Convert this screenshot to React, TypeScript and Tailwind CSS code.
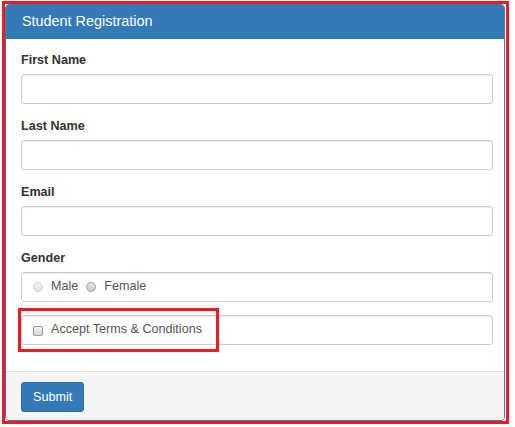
import React from 'react';

const inputCls =
  'h-[30px] w-full rounded-[3px] border border-[#cccccc] bg-white shadow-[inset_0_1px_1px_rgba(0,0,0,0.075)] outline-none';

function Field({ label }: { label: string }) {
  return (
    <div className="mb-[13px]">
      <label className="block h-[18px] mb-[5px] text-[12.6px] leading-[18px] font-bold text-[#333333]">{label}</label>
      <input type="text" className={inputCls} />
    </div>
  );
}

export default function App() {
  return (
    <div className="min-h-screen bg-white pl-[2px] pt-[1px] font-['Liberation_Sans',Arial,sans-serif]">
      {/* red annotation frame */}
      <div className="w-[507px] h-[423px] border-[3px] border-[#ed1c24]">
        <div className="w-[500px] h-full flex flex-col rounded-[4px] border border-[#337ab7] bg-white overflow-hidden">
          <div className="h-[34px] shrink-0 bg-[#337ab7] pt-[8px] px-[16px] text-[14.4px] leading-[16px] text-white">
            Student Registration
          </div>

          <div className="flex-1 pt-[12px] pl-[15px] pr-[11px]">
            <Field label="First Name" />
            <Field label="Last Name" />
            <Field label="Email" />

            <div className="mb-[13px]">
              <label className="block h-[18px] mb-[5px] text-[12.6px] leading-[18px] font-bold text-[#333333]">Gender</label>
              <div className={`${inputCls} flex items-center pl-[11px] pb-[2px] text-[12.6px] text-[#555555]`}>
                <span className="mt-[2px] w-[10px] h-[10px] rounded-full border border-[#d2d2d2] bg-gradient-to-b from-[#f4f4f4] to-[#e2e2e2]" />
                <span className="ml-[8px]">Male</span>
                <span className="mt-[2px] ml-[8px] w-[10px] h-[10px] rounded-full border border-[#a3a3a3] bg-gradient-to-b from-[#e2e2e2] to-[#c8c8c8]" />
                <span className="ml-[8px]">Female</span>
              </div>
            </div>

            <div className="relative">
              <div className={`${inputCls} flex items-center pl-[11px] pb-[2px] text-[12.6px] text-[#555555]`}>
                <span className="mt-[3px] w-[10px] h-[10px] rounded-[2px] border border-[#9a9a9a] bg-gradient-to-b from-[#f2f2f2] to-[#d9d9d9]" />
                <span className="ml-[8px]">Accept Terms &amp; Conditions</span>
              </div>
              <div className="absolute left-[-3px] top-[-7px] w-[201px] h-[44px] border-[3px] border-[#ed1c24]" />
            </div>
          </div>

          <div className="h-[49px] shrink-0 border-t border-[#dddddd] bg-[#f5f5f5] pt-[10px] pl-[15px]">
            <button className="h-[30px] px-[11px] rounded-[3px] border border-[#2e6da4] bg-[#337ab7] text-[12.6px] text-white">
              Submit
            </button>
          </div>
        </div>
      </div>
    </div>
  );
}
